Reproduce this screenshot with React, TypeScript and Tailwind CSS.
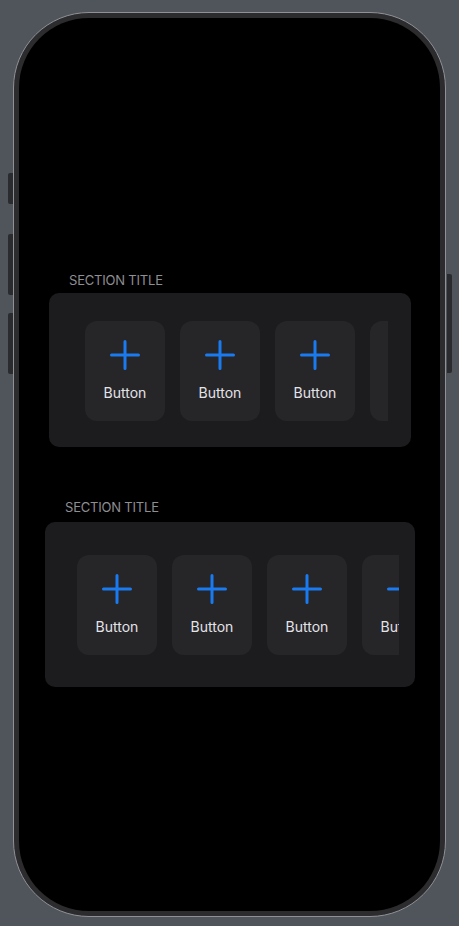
type ShelfProps = {
  offset: string;
  width: string;
  cardClass: string;
  trackClass: string;
  titleClass: string;
};

function PlusGlyph() {
  return (
    <svg width="30" height="30" viewBox="0 0 30 30" fill="none" className="text-[#1a7af0]">
      <path d="M15 1.5v27M1.5 15h27" stroke="currentColor" strokeWidth="3" strokeLinecap="round" />
    </svg>
  );
}

function Tile() {
  return (
    <div className="flex h-[100px] w-[80px] shrink-0 flex-col items-center rounded-[12px] bg-[#262628] pt-[19px]">
      <PlusGlyph />
      <span className="mt-[14px] text-[14px] leading-[17px] text-[#e3e3e8]">Button</span>
    </div>
  );
}

function Shelf({ offset, width, cardClass, trackClass, titleClass }: ShelfProps) {
  return (
    <section className={`${offset} ${width}`}>
      <h2 className={`${titleClass} text-[13px] leading-[16px] tracking-[-0.2px] uppercase text-[#8e8e93]`}>
        Section title
      </h2>
      <div className={`${cardClass} rounded-[10px] bg-[#1c1c1e]`}>
        {/* horizontal strip, last tile cut off by the edge */}
        <div className={`${trackClass} flex gap-[15px] overflow-hidden`}>
          <Tile />
          <Tile />
          <Tile />
          <Tile />
        </div>
      </div>
    </section>
  );
}

export default function App() {
  return (
    <div
      className="h-[926px] w-[459px] overflow-hidden bg-[#50545b] pl-[13px] pt-[12px]"
      style={{ fontFamily: 'Inter, "Noto Sans", sans-serif' }}
    >
      <div className="relative h-[905px] w-[433px] rounded-[76px] border border-[#8f9196] bg-[#2c2c2e] p-[5px]">
        {/* hardware buttons */}
        <div className="absolute left-[-6px] top-[160px] h-[31px] w-[5px] rounded-l-[2px] bg-[#2a2b2e]" />
        <div className="absolute left-[-6px] top-[221px] h-[61px] w-[5px] rounded-l-[2px] bg-[#2a2b2e]" />
        <div className="absolute left-[-6px] top-[300px] h-[61px] w-[5px] rounded-l-[2px] bg-[#2a2b2e]" />
        <div className="absolute right-[-7px] top-[261px] h-[99px] w-[5px] rounded-r-[2px] bg-[#2a2b2e]" />

        <div className="flex h-full w-full flex-col overflow-hidden rounded-[70px] bg-black pt-[254px]">
          <Shelf
            offset="ml-[30px]"
            width="w-[362px]"
            titleClass="mb-[5px] pl-[20px]"
            cardClass="h-[154px] pt-[28px]"
            trackClass="ml-[36px] w-[303px]"
          />
          <div className="h-[52px]" />
          <Shelf
            offset="ml-[26px]"
            width="w-[370px]"
            titleClass="mb-[7px] pl-[20px]"
            cardClass="h-[165px] pt-[33px]"
            trackClass="ml-[32px] w-[322px]"
          />
        </div>
      </div>
    </div>
  );
}
